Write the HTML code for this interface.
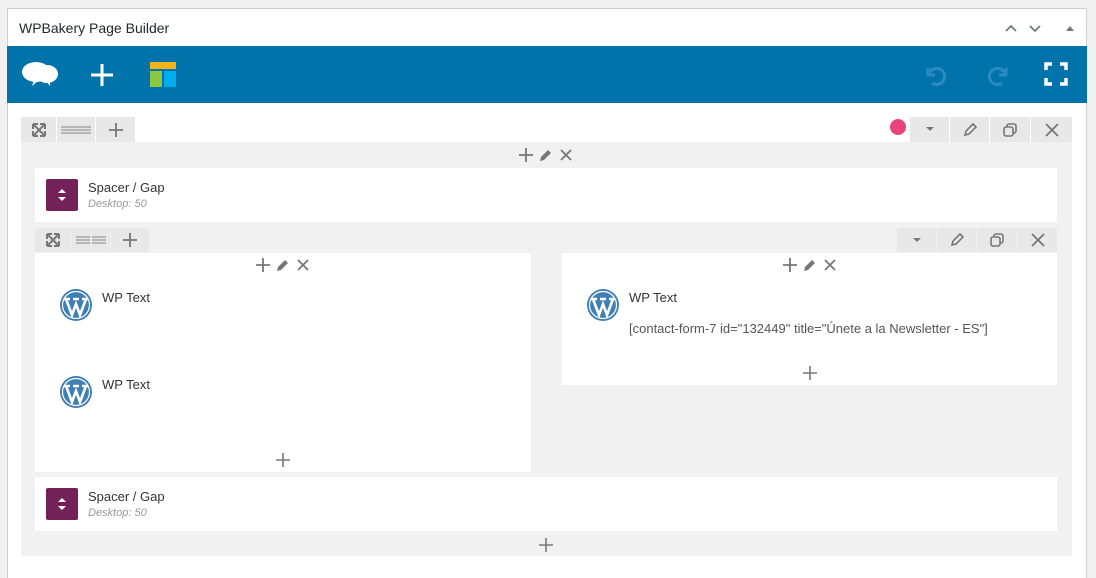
<!DOCTYPE html>
<html><head><meta charset="utf-8"><style>
*{box-sizing:border-box;margin:0;padding:0}
body{width:1096px;height:566px;background:#f1f1f1;font-family:"Liberation Sans",sans-serif;position:relative;overflow:hidden;color:#23282d}
.a{position:absolute}
.btn{position:absolute;background:#e8e8e8;display:flex;align-items:center;justify-content:center;color:#666}
.w{background:#fff}
.t{font-size:13px;color:#333}
.s{font-size:11px;font-style:italic;color:#999}
</style></head><body>
<div class="a" style="left:7px;top:8px;width:1080px;height:570px;background:#fff;border:1px solid #ccd0d4;border-bottom:none"></div>
<div class="a" style="left:19px;top:20px;font-size:14px;color:#23282d">WPBakery Page Builder</div>
<svg class="a" style="left:1002px;top:20px" width="76" height="16"><path d="M4 11l5-5 5 5M28 6l5 5 5-5" stroke="#72777c" stroke-width="1.8" fill="none"/><path d="M64 11l4-5 4 5z" fill="#72777c"/></svg>
<div class="a" style="left:7px;top:46px;width:1080px;height:57px;background:#0073aa"></div>
<svg class="a" style="left:20px;top:58px" width="40" height="32"><ellipse cx="16" cy="14" rx="14" ry="10" fill="#fff"/><ellipse cx="27" cy="16" rx="11" ry="9" fill="#fff"/><path d="M14 22l-2 6 6-5zM26 23l4 5 0-6z" fill="#fff"/></svg>
<svg class="a" style="left:89px;top:62px" width="26" height="26"><path d="M13 2v22M2 13h22" stroke="#fff" stroke-width="3"/></svg>
<svg class="a" style="left:149px;top:61px" width="28" height="27"><rect x="1" y="1" width="26" height="7" fill="#f2b31a"/><rect x="1" y="10" width="12" height="16" fill="#8dc63f"/><rect x="15" y="10" width="12" height="16" fill="#00aeef"/></svg>
<svg class="a" style="left:922px;top:60px" width="90" height="28"><path d="M6 8v7h7" stroke="#2a8bc2" stroke-width="3" fill="none"/><path d="M7 14a8 8 0 1 1 3 9" stroke="#2a8bc2" stroke-width="3" fill="none"/><path d="M84 8v7h-7" stroke="#2a8bc2" stroke-width="3" fill="none"/><path d="M83 14a8 8 0 1 0 -3 9" stroke="#2a8bc2" stroke-width="3" fill="none"/></svg>
<svg class="a" style="left:1044px;top:62px" width="24" height="24"><path d="M2 8V2h6M16 2h6v6M22 16v6h-6M8 22H2v-6" stroke="#fff" stroke-width="3.5" fill="none"/></svg>

<div class="btn" style="left:21px;top:117px;width:35px;height:25px"><svg width="14" height="14"><path d="M1 1l12 12M13 1L1 13M1 1h5M1 1v5M13 1h-5M13 1v5M1 13h5M1 13v-5M13 13h-5M13 13v-5" stroke="#777" stroke-width="2" fill="none"/></svg></div>
<div class="btn" style="left:57px;top:117px;width:38px;height:25px"><svg width="32" height="10"><path d="M1 2h30M1 5h30M1 8h30" stroke="#999" stroke-width="1.2"/></svg></div>
<div class="btn" style="left:96px;top:117px;width:39px;height:25px"><svg width="16" height="16"><path d="M8 1v14M1 8h14" stroke="#777" stroke-width="1.8"/></svg></div>
<div class="a" style="left:890px;top:119px;width:16px;height:16px;border-radius:50%;background:#e9457a"></div>
<div class="btn" style="left:910px;top:117px;width:39px;height:25px"><svg width="8" height="5"><path d="M0 0h8L4 4z" fill="#777"/></svg></div>
<div class="btn" style="left:950px;top:117px;width:39px;height:25px"><svg width="14" height="14"><path d="M2 12l1-4 7-7 3 3-7 7z" stroke="#777" stroke-width="1.6" fill="none"/></svg></div>
<div class="btn" style="left:990px;top:117px;width:40px;height:25px"><svg width="14" height="14"><rect x="1" y="4" width="9" height="9" rx="2" stroke="#777" stroke-width="1.6" fill="none"/><path d="M4 4V3a2 2 0 0 1 2-2h5a2 2 0 0 1 2 2v5a2 2 0 0 1-2 2h-1" stroke="#777" stroke-width="1.6" fill="none"/></svg></div>
<div class="btn" style="left:1031px;top:117px;width:41px;height:25px"><svg width="14" height="14"><path d="M1 1l12 12M13 1L1 13" stroke="#777" stroke-width="1.8"/></svg></div>

<div class="a" style="left:21px;top:142px;width:1051px;height:414px;background:#f1f1f1"></div>
<svg class="a" style="left:518px;top:147px" width="58" height="16"><path d="M8 1v14M1 8h14" stroke="#777" stroke-width="1.8"/><path d="M22 14l1-4 7-7 3 3-7 7z" fill="#777"/><path d="M43 3l10 10M53 3L43 13" stroke="#777" stroke-width="1.8"/></svg>

<div class="a w" style="left:35px;top:168px;width:1022px;height:54px"></div>
<div class="a" style="left:46px;top:179px;width:32px;height:32px;background:#732158;border-radius:2px"></div>
<svg class="a" style="left:56px;top:188px" width="12" height="14"><path d="M6 1l4 4H2zM6 13l4-4H2z" fill="#fff"/></svg>
<div class="a t" style="left:88px;top:180px">Spacer / Gap</div>
<div class="a s" style="left:88px;top:198px">Desktop: 50</div>

<div class="btn" style="left:35px;top:228px;width:35px;height:24px"><svg width="14" height="14"><path d="M1 1l12 12M13 1L1 13M1 1h5M1 1v5M13 1h-5M13 1v5M1 13h5M1 13v-5M13 13h-5M13 13v-5" stroke="#777" stroke-width="2" fill="none"/></svg></div>
<div class="btn" style="left:71px;top:228px;width:39px;height:24px"><svg width="32" height="10"><path d="M1 2h14M1 5h14M1 8h14M17 2h14M17 5h14M17 8h14" stroke="#999" stroke-width="1.2"/></svg></div>
<div class="btn" style="left:111px;top:228px;width:38px;height:24px"><svg width="16" height="16"><path d="M8 1v14M1 8h14" stroke="#777" stroke-width="1.8"/></svg></div>
<div class="btn" style="left:897px;top:228px;width:39px;height:24px"><svg width="8" height="5"><path d="M0 0h8L4 4z" fill="#777"/></svg></div>
<div class="btn" style="left:937px;top:228px;width:39px;height:24px"><svg width="14" height="14"><path d="M2 12l1-4 7-7 3 3-7 7z" stroke="#777" stroke-width="1.6" fill="none"/></svg></div>
<div class="btn" style="left:977px;top:228px;width:40px;height:24px"><svg width="14" height="14"><rect x="1" y="4" width="9" height="9" rx="2" stroke="#777" stroke-width="1.6" fill="none"/><path d="M4 4V3a2 2 0 0 1 2-2h5a2 2 0 0 1 2 2v5a2 2 0 0 1-2 2h-1" stroke="#777" stroke-width="1.6" fill="none"/></svg></div>
<div class="btn" style="left:1018px;top:228px;width:39px;height:24px"><svg width="14" height="14"><path d="M1 1l12 12M13 1L1 13" stroke="#777" stroke-width="1.8"/></svg></div>

<div class="a w" style="left:35px;top:253px;width:496px;height:219px"></div>
<svg class="a" style="left:255px;top:257px" width="58" height="16"><path d="M8 1v14M1 8h14" stroke="#777" stroke-width="1.8"/><path d="M22 14l1-4 7-7 3 3-7 7z" fill="#777"/><path d="M43 3l10 10M53 3L43 13" stroke="#777" stroke-width="1.8"/></svg>
<svg class="a" style="left:59px;top:288px" width="34" height="34"><circle cx="17" cy="17" r="16" fill="#3f7fb5"/><circle cx="17" cy="17" r="13.5" fill="none" stroke="#fff" stroke-width="1.2"/><path d="M7 11l6 16 4-11 4 11 6-16M5 11h6M14 11h6M23 11h6" stroke="#fff" stroke-width="2.6" fill="none"/></svg>
<div class="a t" style="left:102px;top:290px">WP Text</div>
<svg class="a" style="left:59px;top:375px" width="34" height="34"><circle cx="17" cy="17" r="16" fill="#3f7fb5"/><circle cx="17" cy="17" r="13.5" fill="none" stroke="#fff" stroke-width="1.2"/><path d="M7 11l6 16 4-11 4 11 6-16M5 11h6M14 11h6M23 11h6" stroke="#fff" stroke-width="2.6" fill="none"/></svg>
<div class="a t" style="left:102px;top:377px">WP Text</div>
<svg class="a" style="left:275px;top:452px" width="16" height="16"><path d="M8 1v14M1 8h14" stroke="#777" stroke-width="1.6"/></svg>

<div class="a w" style="left:562px;top:253px;width:495px;height:132px"></div>
<svg class="a" style="left:782px;top:257px" width="58" height="16"><path d="M8 1v14M1 8h14" stroke="#777" stroke-width="1.8"/><path d="M22 14l1-4 7-7 3 3-7 7z" fill="#777"/><path d="M43 3l10 10M53 3L43 13" stroke="#777" stroke-width="1.8"/></svg>
<svg class="a" style="left:586px;top:288px" width="34" height="34"><circle cx="17" cy="17" r="16" fill="#3f7fb5"/><circle cx="17" cy="17" r="13.5" fill="none" stroke="#fff" stroke-width="1.2"/><path d="M7 11l6 16 4-11 4 11 6-16M5 11h6M14 11h6M23 11h6" stroke="#fff" stroke-width="2.6" fill="none"/></svg>
<div class="a t" style="left:629px;top:290px">WP Text</div>
<div class="a" style="left:629px;top:321px;font-size:13px;color:#555">[contact-form-7 id="132449" title="Únete a la Newsletter - ES"]</div>
<svg class="a" style="left:802px;top:365px" width="16" height="16"><path d="M8 1v14M1 8h14" stroke="#777" stroke-width="1.6"/></svg>

<div class="a w" style="left:35px;top:477px;width:1022px;height:54px"></div>
<div class="a" style="left:46px;top:488px;width:32px;height:32px;background:#732158;border-radius:2px"></div>
<svg class="a" style="left:56px;top:497px" width="12" height="14"><path d="M6 1l4 4H2zM6 13l4-4H2z" fill="#fff"/></svg>
<div class="a t" style="left:88px;top:489px">Spacer / Gap</div>
<div class="a s" style="left:88px;top:507px">Desktop: 50</div>
<svg class="a" style="left:538px;top:537px" width="16" height="16"><path d="M8 1v14M1 8h14" stroke="#777" stroke-width="1.6"/></svg>
</body></html>
